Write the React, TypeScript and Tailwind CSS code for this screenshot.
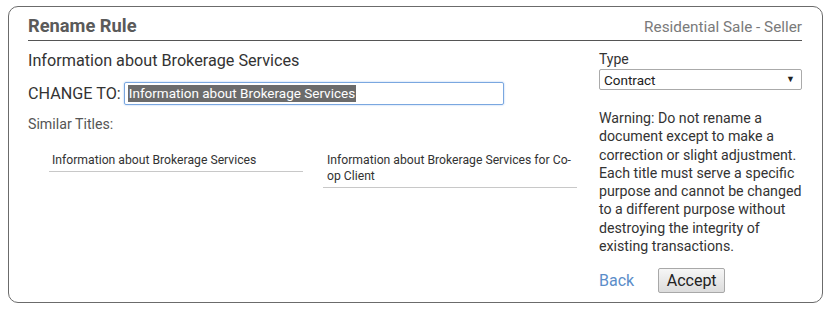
import React from 'react';

const warning =
    'Warning: Do not rename a document except to make a correction or slight adjustment. Each title must serve a specific purpose and cannot be changed to a different purpose without destroying the integrity of existing transactions.';

export default function App() {
    return (
        <div className="w-[835px] h-[315px] bg-white pt-[6px] pl-[8px] font-['Roboto',sans-serif]">
            <div className="w-[815px] h-[297px] border border-[#6b6b6b] rounded-[10px] bg-white pl-[19px] pr-[20px] pt-[8px] flex flex-col">
                {/* Header */}
                <div className="flex flex-row justify-between items-end border-b border-[#555] pb-[3px]">
                    <h2 className="text-[18.3px] font-bold text-[#5a5a5a] leading-[22px]">Rename Rule</h2>
                    <span className="text-[15.3px] text-[#7a7a7a] leading-[20px]">Residential Sale - Seller</span>
                </div>

                <div className="flex flex-row flex-1">
                    {/* Left */}
                    <div className="flex flex-col w-[560px]">
                        <div className="text-[16.2px] text-[#333] mt-[10px] leading-[20px]">Information about Brokerage Services</div>
                        <div className="flex flex-row items-center mt-[11px]">
                            <span className="text-[16.2px] text-[#333] leading-[20px] mr-[3px]">CHANGE TO:</span>
                            <div className="w-[380px] h-[23px] border border-[#7aa7e0] rounded-[2px] flex items-center px-[3px] shadow-[0_0_2px_#9fc3f0]">
                                <span className="bg-[#6b6b6b] text-white text-[13.5px] leading-[17px] px-[1px]">
                                    Information about Brokerage Services
                                </span>
                            </div>
                        </div>
                        <div className="text-[14.2px] text-[#555] mt-[10px] leading-[18px]">Similar Titles:</div>
                        <div className="flex flex-row mt-[20px] pl-[21px] gap-[20px] items-start">
                            <div className="w-[254px] px-[3px] pb-[3px] border-b border-[#c8c8c8] text-[12.2px] text-[#333] leading-[15px]">
                                Information about Brokerage Services
                            </div>
                            <div className="w-[254px] px-[4px] pb-[3px] border-b border-[#c8c8c8] text-[12.2px] text-[#333] leading-[15.5px]">
                                Information about Brokerage Services for Co-
                                <br />
                                op Client
                            </div>
                        </div>
                    </div>

                    {/* Right */}
                    <div className="flex flex-col w-[203px] ml-auto">
                        <div className="text-[14px] text-[#333] mt-[10px] leading-[17px]">Type</div>
                        <div className="h-[21px] border border-[#aaa] rounded-[2px] flex flex-row items-center justify-between px-[4px] mt-[1px] bg-white">
                            <span className="text-[13.5px] text-[#222] leading-[16px]">Contract</span>
                            <span className="text-[9px] text-[#222] mr-[2px]">▼</span>
                        </div>
                        <p className="text-[14.2px] text-[#333] leading-[18.3px] mt-[19px]">{warning}</p>
                        <div className="flex flex-row items-center mt-[13px]">
                            <span className="text-[16px] text-[#5b8dc9] leading-[20px]">Back</span>
                            <button className="ml-[24px] h-[25px] w-[67px] border border-[#a8a8a8] rounded-[2px] bg-gradient-to-b from-[#f6f6f6] to-[#dcdcdc] text-[16px] text-[#222] leading-[20px]">
                                Accept
                            </button>
                        </div>
                    </div>
                </div>
            </div>
        </div>
    );
}
